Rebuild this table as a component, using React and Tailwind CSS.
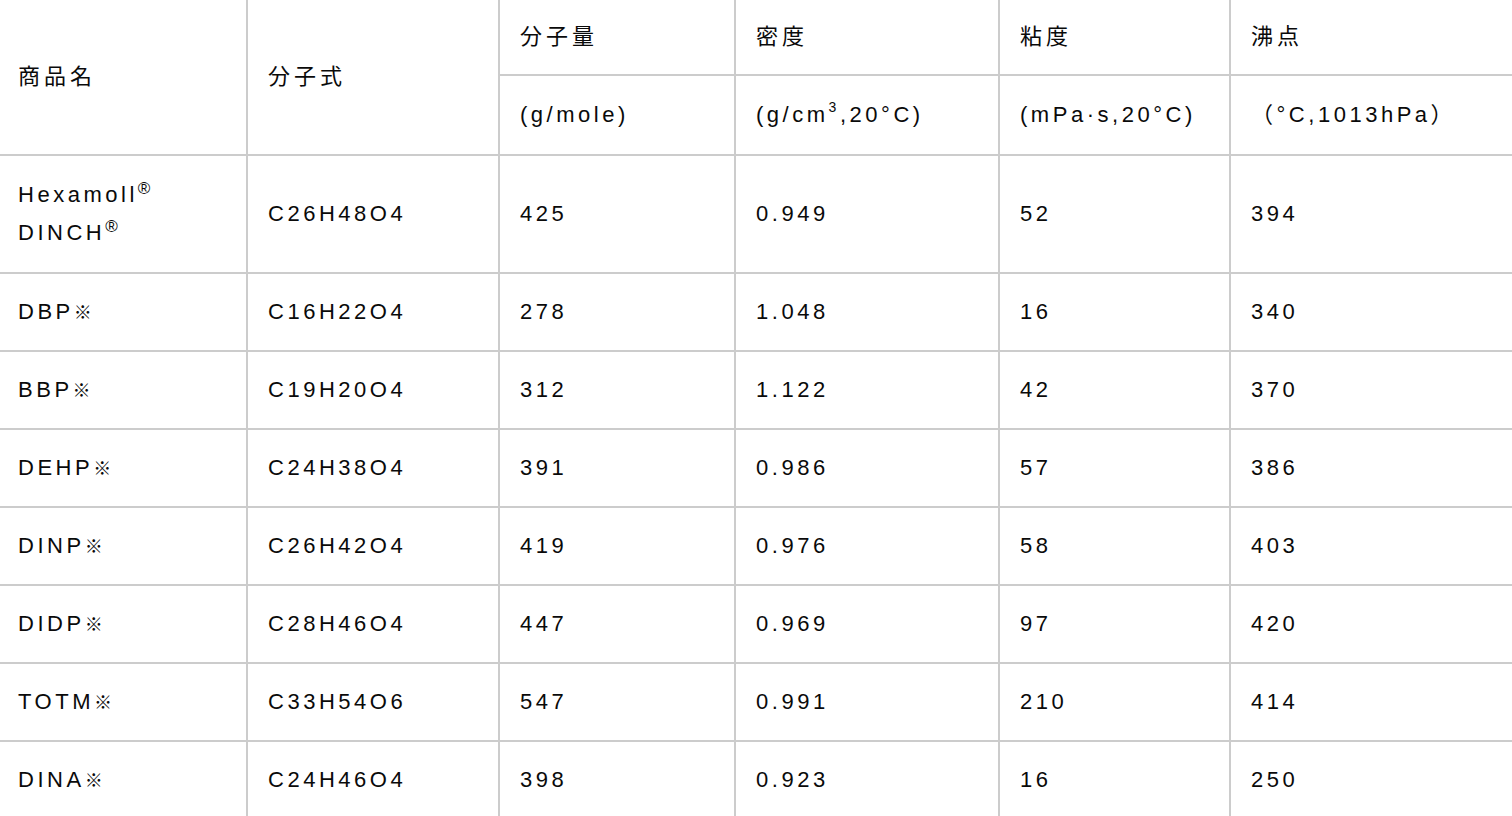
const Mark = () => <span className="text-[18px] tracking-normal">※</span>

const ROWS = [
  { name: <>Hexamoll<sup>®</sup><br />DINCH<sup>®</sup></>, formula: 'C26H48O4', mw: '425', density: '0.949', visc: '52', bp: '394' },
  { name: <>DBP<Mark /></>, formula: 'C16H22O4', mw: '278', density: '1.048', visc: '16', bp: '340' },
  { name: <>BBP<Mark /></>, formula: 'C19H20O4', mw: '312', density: '1.122', visc: '42', bp: '370' },
  { name: <>DEHP<Mark /></>, formula: 'C24H38O4', mw: '391', density: '0.986', visc: '57', bp: '386' },
  { name: <>DINP<Mark /></>, formula: 'C26H42O4', mw: '419', density: '0.976', visc: '58', bp: '403' },
  { name: <>DIDP<Mark /></>, formula: 'C28H46O4', mw: '447', density: '0.969', visc: '97', bp: '420' },
  { name: <>TOTM<Mark /></>, formula: 'C33H54O6', mw: '547', density: '0.991', visc: '210', bp: '414' },
  { name: <>DINA<Mark /></>, formula: 'C24H46O4', mw: '398', density: '0.923', visc: '16', bp: '250' },
]

const cell = 'flex items-center pl-5 border-b-2 border-[#cccccc]'
const line = 'border-r-2'
const jp = 'text-[22px] tracking-[0.18em]'

export default function App() {
  return (
    <div
      className="min-h-screen bg-white text-[#0a0a0a] text-[22px] leading-[38px] tracking-[0.16em]"
      style={{ fontFamily: '"Liberation Sans", "Noto Sans CJK JP", sans-serif' }}
    >
      <div className="grid grid-cols-[248px_252px_236px_264px_231px_1fr] grid-rows-[76px_80px_118px_repeat(7,78px)]">
        {/* header */}
        <div className={`${cell} ${line} ${jp} row-span-2 pl-[18px]`}>商品名</div>
        <div className={`${cell} ${line} ${jp} row-span-2`}>分子式</div>
        <div className={`${cell} ${line} ${jp}`}>分子量</div>
        <div className={`${cell} ${line} ${jp}`}>密度</div>
        <div className={`${cell} ${line} ${jp}`}>粘度</div>
        <div className={`${cell} ${jp}`}>沸点</div>
        <div className={`${cell} ${line}`}>(g/mole)</div>
        <div className={`${cell} ${line}`}>(g/cm<sup className="text-[14px] -top-[0.6em]">3</sup>,20°C)</div>
        <div className={`${cell} ${line}`}>(mPa·s,20°C)</div>
        <div className={`${cell} pl-2`}>（°C,1013hPa）</div>

        {/* body */}
        {ROWS.map((r, i) => (
          <div key={i} className="contents">
            <div className={`${cell} ${line} pl-[18px] [&_sup]:text-[17px] [&_sup]:-top-[0.5em] [&_sup]:tracking-normal`}>
              <span>{r.name}</span>
            </div>
            <div className={`${cell} ${line}`}>{r.formula}</div>
            <div className={`${cell} ${line}`}>{r.mw}</div>
            <div className={`${cell} ${line}`}>{r.density}</div>
            <div className={`${cell} ${line}`}>{r.visc}</div>
            <div className={cell}>{r.bp}</div>
          </div>
        ))}
      </div>
    </div>
  )
}
